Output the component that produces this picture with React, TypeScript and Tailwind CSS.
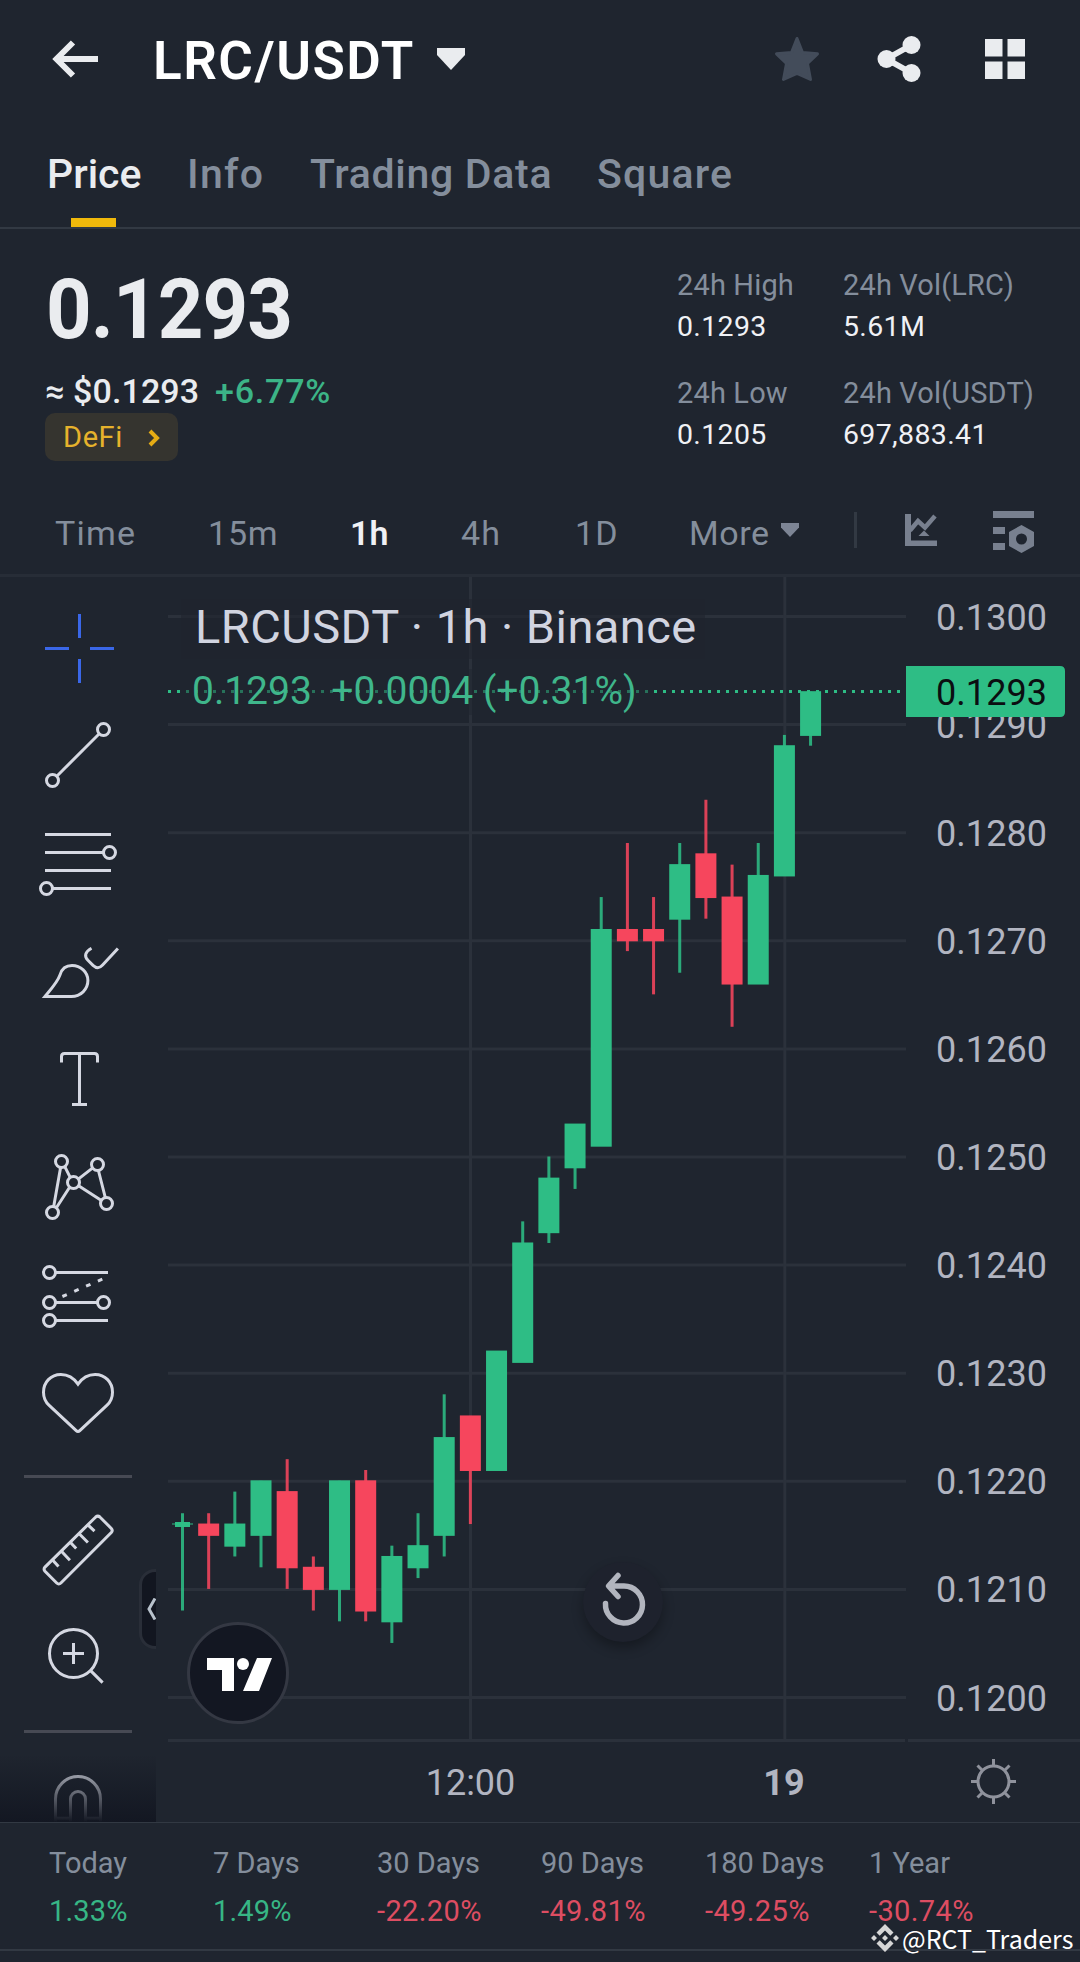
import type { ReactNode } from "react";

const UP = "#2ebd85";
const DOWN = "#f6465d";

// [open, close, high, low] in 0.0001 steps above 0.1200
const candles = [
  [16, 16, 17, 8],
  [16, 15, 17, 10],
  [14, 16, 19, 13],
  [15, 20, 20, 12],
  [19, 12, 22, 10],
  [12, 10, 13, 8],
  [10, 20, 20, 7],
  [20, 8, 21, 7],
  [7, 13, 14, 5],
  [12, 14, 17, 11],
  [15, 24, 28, 13],
  [26, 21, 26, 16],
  [21, 32, 32, 21],
  [31, 42, 44, 31],
  [43, 48, 50, 42],
  [49, 53, 53, 47],
  [51, 71, 74, 51],
  [71, 70, 79, 69],
  [71, 70, 74, 65],
  [72, 77, 79, 67],
  [78, 74, 83, 72],
  [74, 66, 77, 62],
  [66, 76, 79, 66],
  [76, 88, 89, 76],
  [89, 93, 93, 88],
];

const prices = [
  "0.1300",
  "0.1290",
  "0.1280",
  "0.1270",
  "0.1260",
  "0.1250",
  "0.1240",
  "0.1230",
  "0.1220",
  "0.1210",
  "0.1200",
];

const tabs = [
  { name: "Info", className: "w-[123px] tracking-[1.3px]" },
  { name: "Trading Data", className: "w-[287px] tracking-[0.7px]" },
  { name: "Square", className: "tracking-[1.2px]" },
];

const changes = [
  { label: "Today", value: "1.33%" },
  { label: "7 Days", value: "1.49%" },
  { label: "30 Days", value: "-22.20%" },
  { label: "90 Days", value: "-49.81%" },
  { label: "180 Days", value: "-49.25%" },
  { label: "1 Year", value: "-30.74%" },
];

const y = (v: number) => 1120 - v * 10.81;
const x = (i: number) => 26.5 + i * 26.17;

const Tool = ({ children, color = "#d5d8e2" }: { children: ReactNode; color?: string }) => {
  return (
    <div className="flex h-[108px] w-full shrink-0 items-center justify-center">
      <svg
        className="h-[84px] w-[84px] overflow-visible"
        viewBox="0 0 28 28"
        fill="none"
        stroke={color}
        strokeWidth="1"
      >
        {children}
      </svg>
    </div>
  );
};

const Divider = () => {
  return (
    <div className="flex h-[39px] shrink-0 items-center pl-6">
      <div className="h-[3px] w-[108px] bg-[#474a54]"></div>
    </div>
  );
};

const Stat = ({ label, value }: { label: string; value: string }) => {
  return (
    <div className="whitespace-nowrap text-[29px] leading-8">
      <div className="tracking-[0.15px] text-[#848e9c]">{label}</div>
      <div className="mt-[10px] text-[28.5px] tracking-[0.35px] text-[#f0f1f5]">{value}</div>
    </div>
  );
};

const Header = () => {
  return (
    <div className="flex h-[118px] items-center pl-[52px]">
      <svg className="h-[38px] w-[46px]" viewBox="0 0 46 38" fill="none" stroke="#eaecef" strokeWidth="6">
        <path d="M46 19H4M21 2.5L4.5 19L21 35.5" />
      </svg>
      <div className="ml-[55px] mt-[5px] w-[284px] whitespace-nowrap text-[53px] font-semibold leading-none tracking-[1.5px] text-white">
        LRC/USDT
      </div>
      <svg className="h-[22px] w-7" viewBox="0 0 28 22" fill="#eaecef">
        <path d="M0 0H28V7L14 22L0 7Z" />
      </svg>
      <svg className="ml-[309px] h-[46px] w-[46px]" viewBox="0 0 46 46" fill="#434c5a" stroke="#434c5a" strokeWidth="3" strokeLinejoin="round">
        <path d="M23 2.5L28.5 16.5L43.5 17.8L33.5 27.5L36.5 43.5L23 37.5L9.5 43.5L12.5 27.5L2.5 17.8L17.5 16.5Z" />
      </svg>
      <svg className="ml-[57px] h-[46px] w-[44px]" viewBox="0 0 44 46" fill="#eaecef">
        <path d="M34.5 9L9.5 23L34.5 37" fill="none" stroke="#eaecef" strokeWidth="6" />
        <circle cx="34.5" cy="9" r="9" />
        <circle cx="9.5" cy="23" r="9" />
        <circle cx="34.5" cy="37" r="9" />
      </svg>
      <svg className="ml-[64px] h-10 w-10" viewBox="0 0 40 40" fill="#eaecef">
        <path d="M0 0H17.5V17.5H0ZM22.5 0H40V17.5H22.5ZM0 22.5H17.5V40H0ZM22.5 22.5H40V40H22.5Z" />
      </svg>
    </div>
  );
};

const Tabs = () => {
  return (
    <div className="flex h-[111px] border-b-2 border-[#323943] pl-[47px] text-[41px] font-medium leading-none text-[#848e9c]">
      <div className="flex w-[140px] flex-col justify-between">
        <div className="mt-[36px] text-[#eaecef]">Price</div>
        <div className="ml-6 h-[9px] w-[45px] bg-[#f0b90b]"></div>
      </div>
      {tabs.map((tab) => (
        <div key={tab.name} className={`mt-[36px] whitespace-nowrap ${tab.className}`}>
          {tab.name}
        </div>
      ))}
    </div>
  );
};

const Summary = () => {
  return (
    <div className="flex h-[265px]">
      <div className="w-[677px] shrink-0 pl-[45px] pt-[41px]">
        <div className="ml-px origin-left scale-x-[0.96] text-[83px] font-bold leading-[80px] tracking-[-1px] text-[#eaecef]">
          0.1293
        </div>
        <div className="mt-[21px] flex whitespace-nowrap text-[34px] font-medium leading-10">
          <div className="w-[170px] tracking-[0.1px] text-[#eaecef]">≈ $0.1293</div>
          <div className="tracking-[0.8px] text-[#3cb487]">+6.77%</div>
        </div>
        <div className="mt-[2px] flex h-12 w-[133px] items-center justify-between rounded-[10px] bg-[#35342f] pl-[18px] pr-[18px] pt-px text-[29px] tracking-[0.6px] text-[#e6b22c]">
          DeFi
          <svg className="h-[18px] w-3" viewBox="0 0 12 18" fill="none" stroke="#e6ac14" strokeWidth="4">
            <path d="M2 2L9 9L2 16" />
          </svg>
        </div>
      </div>
      <div className="grid w-[390px] grid-cols-[166px_1fr] content-start gap-y-[34px] pt-[40px]">
        <Stat label="24h High" value="0.1293" />
        <Stat label="24h Vol(LRC)" value="5.61M" />
        <Stat label="24h Low" value="0.1205" />
        <Stat label="24h Vol(USDT)" value="697,883.41" />
      </div>
    </div>
  );
};

const Intervals = () => {
  return (
    <div className="flex h-[83px] items-center border-b-[3px] border-[#272d37] pl-[55px] text-[34px] leading-none text-[#848e9c]">
      <div className="mb-[2px] w-[153px] tracking-[1.2px]">Time</div>
      <div className="mb-[2px] w-[142px] tracking-[0.8px]">15m</div>
      <div className="mb-[2px] w-[111px] font-semibold text-[#f0f1f5]">1h</div>
      <div className="mb-[2px] w-[114px] tracking-[1.2px]">4h</div>
      <div className="mb-[2px] w-[114px] tracking-[1.2px]">1D</div>
      <div className="mb-[2px] w-[92px] tracking-[0.6px]">More</div>
      <svg className="mb-2 h-[14px] w-[18px]" viewBox="0 0 18 14" fill="#7d8595">
        <path d="M0 0H18V4.5L9 14L0 4.5Z" />
      </svg>
      <div className="mb-2 ml-[55px] h-9 w-[3px] bg-[#323943]"></div>
      <svg className="mb-2 ml-12 h-8 w-8" viewBox="0 0 32 32" fill="none" stroke="#78808f" strokeWidth="5">
        <path d="M3 0V29.5H32" strokeWidth="6" />
        <path d="M5 16.5L13 7L20 13.5L30 2" strokeWidth="4.5" />
        <path d="M13.5 22L19 16.5L24.5 22Z" fill="#78808f" stroke="none" />
      </svg>
      <svg className="mb-[5px] ml-14 h-[42px] w-[41px]" viewBox="0 0 41 42" fill="#78808f">
        <path d="M0 0H41V7H0ZM0 16H12V23H0ZM0 32H12V39H0Z" />
        <path
          fillRule="evenodd"
          d="M28.5 14L41 21V35L28.5 42L16 35V21ZM28.5 22.5A5.5 5.5 0 1 0 28.5 33.5A5.5 5.5 0 1 0 28.5 22.5Z"
        />
      </svg>
    </div>
  );
};

const Toolbar = () => {
  return (
    <div className="relative h-full w-[156px] overflow-hidden">
      <div className="flex h-full flex-col pt-4">
        <Tool color="#3a67e8">
          <path d="M14.5 3V11M14.5 18V26M3 14.5H11M18 14.5H26" />
        </Tool>
        <Tool>
          <circle cx="22.5" cy="5.5" r="2" />
          <circle cx="5.5" cy="22.5" r="2" />
          <path d="M7 21L21 7" />
        </Tool>
        <Tool>
          <path d="M3 4.5H25M3 10.5H22.5M3 16.5H25M5.5 22.5H25" />
          <circle cx="24.5" cy="10.5" r="2" />
          <circle cx="3.5" cy="22.5" r="2" />
        </Tool>
        <Tool>
          <path d="M3 22.5H11.8C14.9 22.5 17.3 20.1 17.3 17.2C17.3 14.4 14.9 12.2 12 12.2C10 12.2 8.6 13.3 8 15.3C7.3 17.5 5.6 19.4 3 22.5Z" />
          <path d="M18.5 6.4C16.3 7.6 16 9.1 17.3 10.4L19 12.1C20.2 13.2 21.1 13.2 22.2 12L27.3 6.5" />
        </Tool>
        <Tool>
          <path d="M8.5 8.5V6.5Q8.5 5.5 9.5 5.5H19.5Q20.5 5.5 20.5 6.5V8.5M14.5 5.5V22.5M12 22.5H17" />
        </Tool>
        <Tool>
          <circle cx="8.5" cy="5.5" r="2" />
          <circle cx="20.5" cy="6.5" r="2" />
          <circle cx="12.5" cy="12.5" r="2" />
          <circle cx="5.5" cy="22.5" r="2" />
          <circle cx="23.5" cy="19.5" r="2" />
          <path d="M8.2 7.5L5.9 20.5M9.6 7.2L11.4 10.8M11.2 14.1L6.8 20.9M14.2 11.3L18.8 7.7M14.2 13.6L21.8 18.5M20.8 8.5L23.1 17.5" />
        </Tool>
        <Tool>
          <circle cx="4.5" cy="6.5" r="2" />
          <circle cx="4.5" cy="16.5" r="2" />
          <circle cx="22.5" cy="16.5" r="2" />
          <circle cx="4.5" cy="22.5" r="2" />
          <path d="M6.5 6.5H24M6.5 16.5H20.5M6.5 22.5H24" />
          <path d="M8.8 14.5L22.4 8.6" strokeDasharray="1.6 2.7" />
        </Tool>
        <Tool>
          <path d="M14 7.7C12.6 5.7 10.8 4.5 8.3 4.5C4.9 4.5 2.5 7.1 2.5 10.4C2.5 12.3 3.2 13.7 4.4 14.8L13.4 23.2Q14 23.8 14.6 23.2L23.6 14.8C24.8 13.7 25.5 12.3 25.5 10.4C25.5 7.1 23.1 4.5 19.7 4.5C17.2 4.5 15.4 5.7 14 7.7Z" />
        </Tool>
        <Divider />
        <Tool>
          <path d="M19.9 3Q20.6 2.4 21.3 3L25.1 6.8Q25.7 7.5 25.1 8.2L8.3 25Q7.6 25.7 6.9 25L3 21.1Q2.4 20.4 3 19.7Z" />
          <path d="M5.6 17.4L7.5 19.5M8.4 14.3L11.3 17.4M11.5 11.5L13.4 13.5M14.4 8.6L17.3 11.5M17.3 5.6L19.5 7.7" />
        </Tool>
        <Tool>
          <circle cx="12.5" cy="12.5" r="8" />
          <path d="M12.5 9V16M9 12.5H16M18.2 18.2L22.2 22.2" />
        </Tool>
        <Divider />
        <Tool>
          <path d="M6.5 22V12A7.5 7.5 0 0 1 21.5 12V22M11.5 22V12A2.5 2.5 0 0 1 16.5 12V22M6.5 18.4H11.5M16.5 18.4H21.5" />
        </Tool>
      </div>
      <div className="absolute bottom-0 left-0 h-[68px] w-full bg-linear-to-b from-transparent to-[#131722]"></div>
      <div className="absolute left-[139px] top-[992px] flex h-[80px] w-[30px] items-center rounded-l-2xl border-[3px] border-[#292e38] bg-[#121620] pl-[5px]">
        <svg className="h-[22px] w-[9px]" viewBox="0 0 9 22" fill="none" stroke="#b8c2cc" strokeWidth="3">
          <path d="M8 0.5L2 11L8 21.5" />
        </svg>
      </div>
    </div>
  );
};

const Chart = () => {
  return (
    <div className="relative h-full w-[924px]">
      <svg className="h-full w-full font-[Roboto,sans-serif]" viewBox="0 0 924 1245">
        <g stroke="#2b313b" strokeWidth="3">
          {prices.map((p, i) => (
            <path key={p} d={`M12 ${39.5 + i * 108.1}H750`} />
          ))}
          <path d="M314.5 0V1163M628.8 0V1163M12 1163.5H749M752 1163.5H924" />
        </g>
        <path d="M12 114.5H748" stroke={UP} strokeWidth="3" strokeDasharray="3 6" />
        {candles.map(([open, close, high, low], i) => {
          const color = close >= open ? UP : DOWN;
          const top = y(Math.max(open, close));
          const height = Math.abs(close - open) * 10.81;
          return (
            <g key={i} fill={color}>
              <rect x={x(i) - 1.5} y={y(high)} width="3" height={(high - low) * 10.81} opacity="0.88" />
              {height ? (
                <rect x={x(i) - 10.5} y={top - 0.5} width="21" height={height + 1.5} />
              ) : (
                <path d={`M${x(i) - 10.5} ${top - 0.5}h3v-1.5h15v1.5h3v1h-3v2.5h-15v-2.5h-3z`} />
              )}
            </g>
          );
        })}
        <g fill="#b2b5c1" fontSize="36">
          {prices.map((p, i) => (
            <text key={p} x="780" y={52.5 + i * 108.1} textLength="111">
              {p}
            </text>
          ))}
          <text x="314.5" y="1218" textAnchor="middle">
            12:00
          </text>
          <text x="628" y="1218" textAnchor="middle" fontWeight="700">
            19
          </text>
        </g>
        <path d="M750 89H904Q909 89 909 94V135Q909 140 904 140H750Z" fill={UP} />
        <text x="780" y="128" textLength="111" fontSize="36" fill="#0b0e11">
          0.1293
        </text>
        <g fill="none" stroke="#8f929c" strokeWidth="3">
          <circle cx="837.5" cy="1204.5" r="15.5" />
          <path d="M837.5 1189V1182M837.5 1220V1227M822 1204.5H815M853 1204.5H860M826.5 1193.5L821.5 1188.5M848.5 1193.5L853.5 1188.5M826.5 1215.5L821.5 1220.5M848.5 1215.5L853.5 1220.5" />
        </g>
      </svg>
      <div className="absolute left-[25px] top-[22px] h-[60px] whitespace-nowrap bg-[#1f252f]/60 pl-[14px] pr-2 text-[47px] leading-[56px] tracking-[0.45px] text-[#d1d4e0]">
        LRCUSDT · 1h · Binance
      </div>
      <div className="absolute left-[28px] top-[92px] h-[46px] whitespace-pre bg-[#1f252f]/50 pl-2 pr-[14px] text-[39px] leading-[44px] text-[#3fb68b]">
        0.1293{"  "}+0.0004 (+0.31%)
      </div>
      <div className="absolute left-[31px] top-[1045px] h-[102px] w-[102px] rounded-full border-[3px] border-[#343843] bg-[#131722]">
        <svg className="absolute left-[17px] top-[33px] h-[33px] w-[65px]" viewBox="0 0 65 33" fill="#fff">
          <path d="M0 0H27V33H15V12H0ZM50 0H65L52 33H36Z" />
          <circle cx="36" cy="6" r="6" />
        </svg>
      </div>
      <div className="absolute left-[427px] top-[985px] h-20 w-20 rounded-full bg-[#1e222d] shadow-[0_6px_12px_rgba(0,0,0,0.3)]">
        <svg
          className="h-20 w-20"
          viewBox="0 0 80 80"
          fill="none"
          stroke="#b2b5be"
          strokeWidth="5.5"
          strokeLinecap="round"
          strokeLinejoin="round"
        >
          <path d="M35 13.5L25.5 24L35 34.5M26 24H41A18.5 18.5 0 1 1 22.5 41.5" />
        </svg>
      </div>
    </div>
  );
};

const Changes = () => {
  return (
    <div className="grid h-[129px] grid-cols-[repeat(6,164px)] border-b-2 border-t border-[#323943] pl-[49px] pt-[24px] text-[29px] leading-8">
      {changes.map((c) => (
        <div key={c.label}>
          <div className="text-[#848e9c]">{c.label}</div>
          <div
            className={
              c.value.startsWith("-")
                ? "mt-4 tracking-[0.4px] text-[#dd4d62]"
                : "mt-4 tracking-[0.2px] text-[#37b685]"
            }
          >
            {c.value}
          </div>
        </div>
      ))}
    </div>
  );
};

export default function App() {
  return (
    <div className="relative h-[1962px] w-[1080px] overflow-hidden bg-[#1f252f] font-[Roboto,sans-serif]">
      <Header />
      <Tabs />
      <Summary />
      <Intervals />
      <div className="flex h-[1245px]">
        <Toolbar />
        <Chart />
      </div>
      <Changes />
      <div className="absolute left-[871px] top-[1920px] flex items-center whitespace-nowrap font-['Noto_Sans_CJK_SC',sans-serif] text-[25px] leading-9 text-white">
        <svg className="mr-[3px] h-7 w-7" viewBox="0 0 28 28" fill="#d6d6d6">
          <path d="M14 0L22.5 8.5L19.3 11.7L14 6.4L8.7 11.7L5.5 8.5ZM14 28L5.5 19.5L8.7 16.3L14 21.6L19.3 16.3L22.5 19.5ZM0 14L3 11L6 14L3 17ZM22 14L25 11L28 14L25 17ZM11 14L14 11L17 14L14 17Z" />
        </svg>
        @RCT_Traders
      </div>
    </div>
  );
}
